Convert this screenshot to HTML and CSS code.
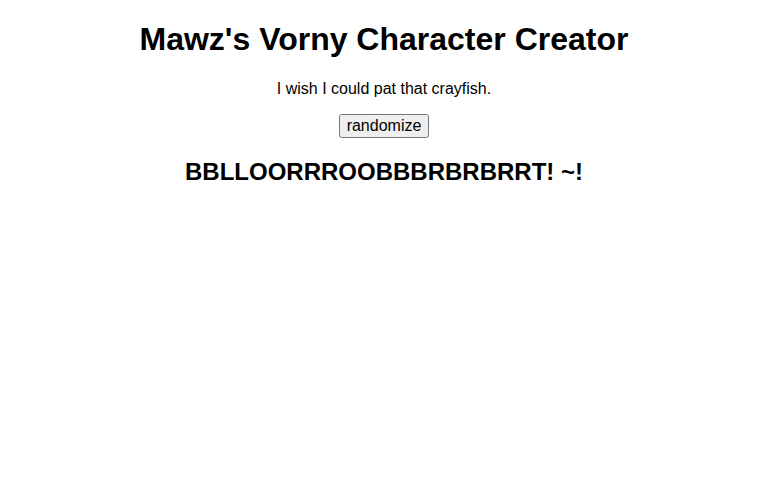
FILE: index.html
```html
<!DOCTYPE html>
<html lang="en">
<head>
    <meta charset="UTF-8">
    <meta name="viewport" content="width=device-width, initial-scale=1.0">
    <title>Mawz's Vorny Character Creator</title>
    <link rel="stylesheet" href="styles.css">
</head>
<body>
    <h1 class="title">Mawz's Vorny Character Creator</h1>
    <p class="quote">I wish I could pat that crayfish.</p>
    <button class="random-button">randomize</button>
    <h2 class="result">BBLLOORRROOBBBRBRBRRT! ~!</h2>
</body>
</html>
```

FILE: styles.css
```css
body {
    font-family: "Liberation Sans", Arial, sans-serif;
    text-align: center;
    margin: 0 8px 8px;
}

.title {
    font-size: 32px;
}

.quote {
    font-size: 16px;
}

.random-button {
    font-family: "Liberation Sans", Arial, sans-serif;
    font-size: 16px;
}

.result {
    font-size: 24px;
}
```
